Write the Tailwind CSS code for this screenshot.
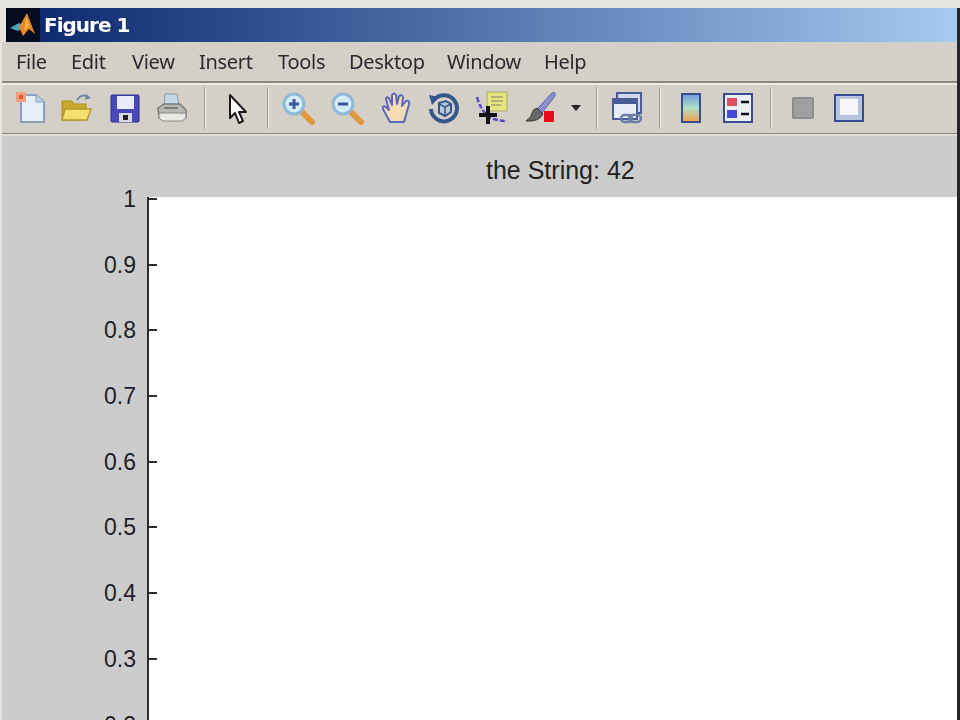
<!DOCTYPE html>
<html><head><meta charset="utf-8"><script src="https://cdn.jsdelivr.net/npm/@tailwindcss/browser@4"></script></head>
<body class="m-0 w-[960px] h-[720px] overflow-hidden bg-[#e6e4de]" style="font-family:'Liberation Sans',sans-serif">
<div class="flex flex-col w-[960px] h-[720px] overflow-hidden blur-[0.6px]">
  <div class="h-[8px] shrink-0 bg-[#e6e4de]"></div>
  <div class="flex-1 min-h-0 ml-[2px] flex flex-col border-r-[3px] border-[#26262a]">
  <div class="shrink-0 h-[34px] ml-[4px] flex items-center bg-gradient-to-r from-[#0a246a] to-[#a6caf0]">
    <div class="w-[34px] h-[34px] bg-[#040c20] flex items-center justify-center">
      <svg width="32" height="32" viewBox="0 0 32 32"><path d="M3 19 L12 14 L17 17 L11 22Z" fill="#4aa8b8"/><path d="M12 18 L20 4 L28 25 L22 20 L16 27 Z" fill="#e8842a"/><path d="M19 7 L23 17 L17 22 Z" fill="#f4b040"/></svg>
    </div>
    <span class="ml-[4px] text-[20px] font-bold text-white tracking-[-1px]" style="font-family:'DejaVu Sans',sans-serif">Figure 1</span>
  </div>
  <div class="shrink-0 h-[39px] bg-[#d4d0c8] flex items-center pl-[14px] gap-[24px] text-[20px] tracking-[-0.3px] text-[#2a2a30]" style="font-family:'Noto Sans',sans-serif">
    <span class="w-[31px]">File</span><span class="w-[35px]">Edit</span><span class="w-[42px] ml-[2px]">View</span><span class="w-[55px] ml-[1px]">Insert</span><span class="w-[47px]">Tools</span><span class="w-[74px]">Desktop</span><span class="w-[73px]">Window</span><span class="w-[40px]">Help</span>
  </div>
  <div class="shrink-0 h-[2px] bg-[#8a8880]"></div>
  <div class="shrink-0 h-[2px] bg-[#eeece6]"></div>
  <div class="shrink-0 h-[48px] bg-[#d4d0c8] flex items-center pl-[14px] pb-[3px]">
    <svg width="32" height="32" viewBox="0 0 32 32"><path d="M5 3H20L28 10V30H5Z" fill="#e4effa" stroke="#8aa0c0" stroke-width="2"/><path d="M20 3V10H28" fill="#c0d4ea" stroke="#8aa0c0"/><rect x="0" y="0" width="10" height="10" fill="#f0a080"/><rect x="3" y="3" width="4" height="4" fill="#e06030"/></svg>
    <svg class="ml-[12px]" width="32" height="32" viewBox="0 0 32 32"><path d="M2 9H12L14 12H26V28H2Z" fill="#c8a830" stroke="#b09020"/><path d="M5 17H31L27 28H2Z" fill="#f4e070" stroke="#b89820" stroke-width="1.5"/><path d="M17 8 Q22 1 28 5" fill="none" stroke="#7088a8" stroke-width="2"/><path d="M26 2 L31 6 L25 8Z" fill="#7088a8"/></svg>
    <svg class="ml-[17px]" width="32" height="32" viewBox="0 0 32 32"><rect x="2" y="3" width="28" height="27" rx="1" fill="#4848b8" stroke="#303088"/><rect x="8" y="4" width="17" height="13" fill="#e8ecf8"/><rect x="10" y="21" width="13" height="9" fill="#d8d8e4"/><rect x="14" y="23" width="5" height="5" fill="#222"/></svg>
    <svg class="ml-[15px]" width="32" height="32" viewBox="0 0 32 32"><path d="M9 2H21L23 14H8Z" fill="#c4d8e8" stroke="#8a98a8"/><path d="M2 16L8 12H24L30 18V26H3Z" fill="#b8b8b4" stroke="#787878" stroke-width="1.5"/><path d="M3 21H30V26L26 29H7L3 26Z" fill="#e8e8e4" stroke="#888"/><rect x="8" y="15" width="14" height="2" fill="#807c78"/></svg>
    <div class="ml-[16px] w-[2px] h-[42px] bg-[#9c9a92] border-r border-[#eeece6]"></div>
    <svg class="ml-[15px]" width="32" height="32" viewBox="0 0 32 32"><path d="M9 3L9 26L14 21L18 31L22 29L18 20L25 20Z" fill="#fff" stroke="#1a1a1a" stroke-width="2" stroke-linejoin="round"/></svg>
    <div class="ml-[14px] w-[2px] h-[42px] bg-[#9c9a92] border-r border-[#eeece6]"></div>
    <svg class="ml-[12px]" width="34" height="34" viewBox="0 0 34 34"><path d="M20 20L31 31" stroke="#e09a40" stroke-width="6" stroke-linecap="round"/><circle cx="13" cy="13" r="10" fill="#d4ecf6" stroke="#90b8d8" stroke-width="3"/><path d="M8 13H18M13 8V18" stroke="#3858a0" stroke-width="3"/></svg>
    <svg class="ml-[15px]" width="34" height="34" viewBox="0 0 34 34"><path d="M20 20L31 31" stroke="#e09a40" stroke-width="6" stroke-linecap="round"/><circle cx="13" cy="13" r="10" fill="#d4ecf6" stroke="#90b8d8" stroke-width="3"/><path d="M8 13H18" stroke="#3858a0" stroke-width="3"/></svg>
    <svg class="ml-[16px]" width="34" height="34" viewBox="0 0 34 34"><path d="M10 31L3 18Q2 14 6 16L9 19L6 8Q6 5 9 7L12 14L12 4Q14 1 16 4L17 13L19 5Q22 3 23 6L22 15L26 10Q30 9 29 13L26 24L24 31Z" fill="#f6dcb4" stroke="#5a68c0" stroke-width="2" stroke-linejoin="round"/></svg>
    <svg class="ml-[14px]" width="32" height="32" viewBox="0 0 32 32"><path d="M6 8A13 13 0 1 1 3 17" fill="none" stroke="#34588c" stroke-width="4"/><path d="M1 3L11 5L4 13Z" fill="#34588c"/><path d="M11 11L18 9L23 12V20L17 24L11 21Z" fill="#b8c8dc" stroke="#34588c" stroke-width="2"/><path d="M11 12L17 15V24M17 15L23 12" fill="none" stroke="#34588c" stroke-width="1.5"/></svg>
    <svg class="ml-[15px]" width="34" height="34" viewBox="0 0 34 34"><rect x="12" y="1" width="20" height="19" fill="#e8e480" stroke="#a8a860"/><path d="M16 6H28M16 10H28M16 14H26" stroke="#a0a070" stroke-width="1.5"/><path d="M2 6Q6 20 14 26Q22 30 32 30" fill="none" stroke="#5048c8" stroke-width="2.5" stroke-dasharray="5 2"/><path d="M13 15V33M4 24H22" stroke="#111" stroke-width="4"/></svg>
    <svg class="ml-[15px]" width="34" height="34" viewBox="0 0 34 34"><path d="M13 18L28 2Q32 0 31 5L18 22Z" fill="#8890d0" stroke="#5a68a8"/><path d="M13 17L19 23Q15 31 2 30Q8 26 8 22Q9 18 13 17Z" fill="#686868" stroke="#333"/><rect x="20" y="20" width="10" height="11" fill="#e80818"/></svg>
    <svg class="ml-[12px]" width="12" height="8" viewBox="0 0 12 8"><path d="M1 1H11L6 7Z" fill="#222"/></svg>
    <div class="ml-[14px] w-[2px] h-[42px] bg-[#9c9a92] border-r border-[#eeece6]"></div>
    <svg class="ml-[14px]" width="32" height="34" viewBox="0 0 32 34"><rect x="5" y="2" width="24" height="20" fill="#d0d8ec" stroke="#485c98" stroke-width="2"/><rect x="1" y="8" width="24" height="20" fill="#e8ecf4" stroke="#485c98" stroke-width="2"/><rect x="2" y="9" width="22" height="4" fill="#485c98"/><rect x="9" y="24" width="11" height="7" rx="3.5" fill="none" stroke="#6880a8" stroke-width="2.5"/><rect x="17" y="24" width="12" height="7" rx="3.5" fill="none" stroke="#6880a8" stroke-width="2.5"/></svg>
    <div class="ml-[15px] w-[2px] h-[42px] bg-[#9c9a92] border-r border-[#eeece6]"></div>
    <svg class="ml-[20px]" width="20" height="30" viewBox="0 0 20 30"><defs><linearGradient id="cb" x1="0" y1="0" x2="0" y2="1"><stop offset="0" stop-color="#7098e0"/><stop offset="0.5" stop-color="#b0e0c0"/><stop offset="1" stop-color="#f0a050"/></linearGradient></defs><rect x="1" y="1" width="18" height="28" fill="url(#cb)" stroke="#384c90" stroke-width="2"/></svg>
    <svg class="ml-[22px]" width="30" height="30" viewBox="0 0 30 30"><rect x="1" y="1" width="28" height="28" fill="#eceef6" stroke="#384c90" stroke-width="2"/><rect x="4" y="5" width="10" height="8" fill="#e05060"/><rect x="4" y="17" width="10" height="8" fill="#4848d8"/><path d="M18 9H26M18 21H26" stroke="#111" stroke-width="2.5"/></svg>
    <div class="ml-[17px] w-[2px] h-[42px] bg-[#9c9a92] border-r border-[#eeece6]"></div>
    <svg class="ml-[20px]" width="22" height="22" viewBox="0 0 22 22"><rect x="1" y="1" width="20" height="20" rx="1" fill="#a0a0a0" stroke="#8c8c88" stroke-width="2"/></svg>
    <svg class="ml-[20px]" width="30" height="28" viewBox="0 0 30 28"><rect x="1" y="1" width="28" height="26" fill="#b8c4dc" stroke="#384c90" stroke-width="2"/><rect x="6" y="5" width="18" height="16" fill="#f6f6fa"/></svg>
  </div>
  <div class="shrink-0 h-[1px] bg-[#8a8880]"></div>
  <div class="shrink-0 h-[2px] bg-[#e0ded8]"></div>
  <div class="flex-1 bg-[#cccccc] flex flex-col min-h-0">
    <div class="shrink-0 h-[61px] pl-[484px] pt-[21px] text-[25px] leading-[26px] text-[#222]">the String: 42</div>
    <div class="flex-1 ml-[145px] bg-white border-l-2 border-[#2c2c2c]">
      <div class="flex flex-col">
        <div class="h-[65.7px] relative"><div class="absolute left-0 top-[1px] w-[8px] h-[2px] bg-[#2c2c2c]"></div><span class="absolute right-full mr-[13px] -top-[11px] text-[23px] leading-[26px] text-[#1e1e28]">1</span></div>
        <div class="h-[65.7px] relative"><div class="absolute left-0 top-[1px] w-[8px] h-[2px] bg-[#2c2c2c]"></div><span class="absolute right-full mr-[13px] -top-[11px] text-[23px] leading-[26px] text-[#1e1e28]">0.9</span></div>
        <div class="h-[65.7px] relative"><div class="absolute left-0 top-[1px] w-[8px] h-[2px] bg-[#2c2c2c]"></div><span class="absolute right-full mr-[13px] -top-[11px] text-[23px] leading-[26px] text-[#1e1e28]">0.8</span></div>
        <div class="h-[65.7px] relative"><div class="absolute left-0 top-[1px] w-[8px] h-[2px] bg-[#2c2c2c]"></div><span class="absolute right-full mr-[13px] -top-[11px] text-[23px] leading-[26px] text-[#1e1e28]">0.7</span></div>
        <div class="h-[65.7px] relative"><div class="absolute left-0 top-[1px] w-[8px] h-[2px] bg-[#2c2c2c]"></div><span class="absolute right-full mr-[13px] -top-[11px] text-[23px] leading-[26px] text-[#1e1e28]">0.6</span></div>
        <div class="h-[65.7px] relative"><div class="absolute left-0 top-[1px] w-[8px] h-[2px] bg-[#2c2c2c]"></div><span class="absolute right-full mr-[13px] -top-[11px] text-[23px] leading-[26px] text-[#1e1e28]">0.5</span></div>
        <div class="h-[65.7px] relative"><div class="absolute left-0 top-[1px] w-[8px] h-[2px] bg-[#2c2c2c]"></div><span class="absolute right-full mr-[13px] -top-[11px] text-[23px] leading-[26px] text-[#1e1e28]">0.4</span></div>
        <div class="h-[65.7px] relative"><div class="absolute left-0 top-[1px] w-[8px] h-[2px] bg-[#2c2c2c]"></div><span class="absolute right-full mr-[13px] -top-[11px] text-[23px] leading-[26px] text-[#1e1e28]">0.3</span></div>
        <div class="h-[65.7px] relative"><div class="absolute left-0 top-[1px] w-[8px] h-[2px] bg-[#2c2c2c]"></div><span class="absolute right-full mr-[13px] -top-[11px] text-[23px] leading-[26px] text-[#1e1e28]">0.2</span></div>
      </div>
    </div>
  </div>
  </div>
</div>
</body></html>
